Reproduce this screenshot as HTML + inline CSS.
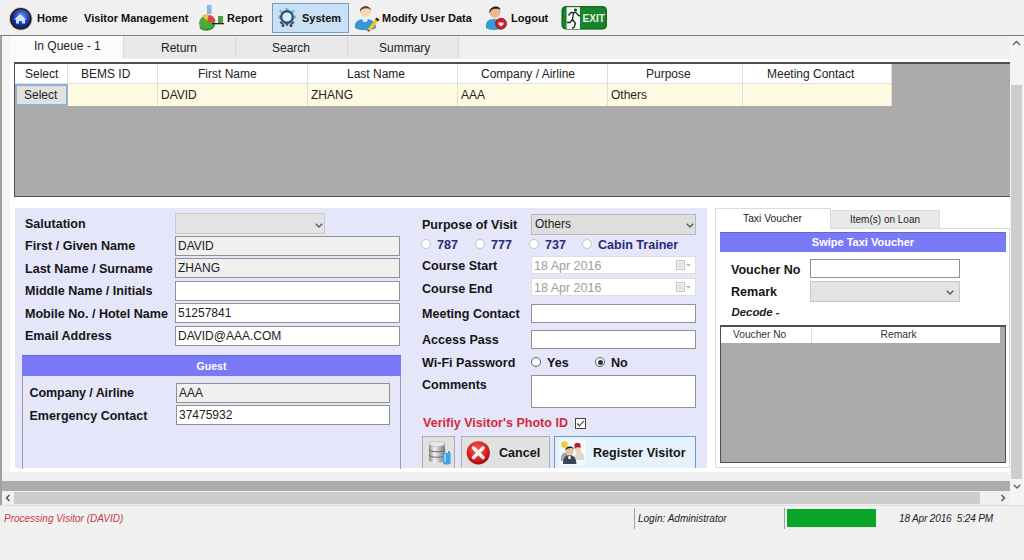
<!DOCTYPE html>
<html><head><meta charset="utf-8">
<style>
*{box-sizing:border-box;margin:0;padding:0}
html,body{width:1024px;height:560px;overflow:hidden;background:#f0f0f0;font-family:"Liberation Sans",sans-serif;color:#000}
.a{position:absolute}
.t{position:absolute;white-space:nowrap;line-height:1}
.mb{font-weight:bold;font-size:11px;color:#111}
.lb{font-weight:bold;font-size:12.55px;color:#151515;margin-top:1px}
.tb{position:absolute;background:#fff;border:1px solid #929292;height:20px;font-size:12px;color:#222;padding:3px 0 0 2px;line-height:13px;white-space:nowrap}
.tb.ro{background:#f0f0f0}
.hdr{position:absolute;background:#7a7af6;color:#fff;font-weight:bold;font-size:10.6px;text-align:center;line-height:22px;box-shadow:inset 0 1px #6666d8}
.gc{position:absolute;top:0;height:100%;border-right:1px solid #dcdcdc;font-size:12px;color:#222;white-space:nowrap}
.radio{position:absolute;width:10px;height:10px;border-radius:50%;border:1px solid #c4c4c4;background:#fff}
.rl{font-weight:bold;font-size:12.55px;color:#2a2a78;margin-top:1px}
</style></head>
<body>
<!-- MENU BAR -->
<div class="a" style="left:0;top:0;width:1024px;height:35px;background:#f0f0f0"></div>
<div class="a" style="left:0;top:35px;width:1024px;height:1px;background:#7d7d7d"></div>
<!-- home icon -->
<svg class="a" style="left:8px;top:6px" width="26" height="26" viewBox="0 0 26 26">
 <defs><radialGradient id="hg" cx="0.55" cy="0.35" r="0.75"><stop offset="0" stop-color="#6a8ef0"/><stop offset="0.55" stop-color="#1e36a8"/><stop offset="1" stop-color="#0c1250"/></radialGradient></defs>
 <circle cx="12.8" cy="12.8" r="11.8" fill="#d8c888" opacity="0.85"/>
 <circle cx="12.8" cy="12.8" r="10.8" fill="#141428"/>
 <circle cx="12.8" cy="12.8" r="9.6" fill="url(#hg)"/>
 <path d="M6 13.5 L12 8 L18.5 13.5 L17 13.5 L17 17.5 L14 17.5 L14 15 L11 15 L11 17.5 L8 17.5 L8 13.5 Z" fill="#c8e4ff"/>
</svg>
<div class="t mb" style="left:37px;top:13px">Home</div>
<div class="t mb" style="left:84px;top:13px">Visitor Management</div>
<!-- report icon -->
<svg class="a" style="left:194px;top:2px" width="34" height="32" viewBox="194 2 34 32">
 <rect x="207" y="5" width="4.5" height="9" fill="#8fb4e8"/>
 <ellipse cx="207" cy="23" rx="8" ry="7.5" fill="#4ea83a"/>
 <path d="M200 27 C202 31 212 31 214.5 25" fill="none" stroke="#2f8a2a" stroke-width="1.5"/>
 <path d="M207 21 L202 16 C204 14 207 13.8 209 14.5 Z" fill="#f0c040"/>
 <path d="M207.5 22 L209 15 C212 15 215 17.5 215.5 21.5 Z" fill="#e04048"/>
 <rect x="218" y="16" width="5" height="7" fill="#48a438"/>
 <rect x="212" y="23" width="12" height="1.3" fill="#222"/>
</svg>
<div class="t mb" style="left:227px;top:13px">Report</div>
<!-- system button -->
<div class="a" style="left:272px;top:3px;width:77px;height:30px;background:#c9e0f5;border:1px solid #6f9cc0"></div>
<svg class="a" style="left:272px;top:3px" width="30" height="30" viewBox="272 3 30 30">
 <g fill="#8a98a8" opacity="0.8">
  <rect x="278" y="15.5" width="3" height="3"/><rect x="293" y="15.5" width="3" height="3"/>
  <rect x="285.5" y="8" width="3" height="2.5"/>
  <rect x="279.5" y="10" width="2.5" height="2.5" transform="rotate(45 280.7 11.2)"/>
  <rect x="292" y="10" width="2.5" height="2.5" transform="rotate(45 293.2 11.2)"/>
 </g>
 <path d="M280 22 L283 24 M294 22 L291 24" stroke="#2a4a68" stroke-width="1.6"/>
 <circle cx="287" cy="17" r="5.8" fill="#dff0fb" stroke="#245a80" stroke-width="2.4"/>
 <path d="M284.5 22.5 L287 26.5 L289.5 22.5 Z" fill="#245a70"/>
 <circle cx="283" cy="25.5" r="1.5" fill="#7a2a3a"/>
 <circle cx="291" cy="25.5" r="1.5" fill="#7a2a3a"/>
 <circle cx="286" cy="16" r="2" fill="#f0e0d8" opacity="0.7"/>
</svg>
<div class="t mb" style="left:302px;top:13px">System</div>
<!-- modify user icon -->
<svg class="a" style="left:350px;top:2px" width="32" height="32" viewBox="350 2 32 32">
 <path d="M355 28 C354 22 358 19 365 19 C372 19 376 22 376 28 C372 31 359 31 355 28 Z" fill="#3a96d2"/>
 <path d="M362 19 L368 19 L366.5 22 L363.5 22 Z" fill="#d8eef8"/>
 <circle cx="365.5" cy="11.5" r="5.4" fill="#f4d6b4"/>
 <path d="M360 12 C359 5 371 4 371 11 C370 8.5 368 8 365.5 8.5 C363 8 361 9.5 360 12 Z" fill="#5a3a24"/>
 <path d="M367.5 29.5 L375 19.5 L378 21.5 L370.5 31 Z" fill="#f0c23a"/>
 <path d="M375 19.5 L376.5 17.5 L379.5 19.5 L378 21.5 Z" fill="#3a2418"/>
 <path d="M367.5 29.5 L370.5 31 L367.8 31.5 Z" fill="#222"/>
</svg>
<div class="t mb" style="left:382px;top:13px">Modify User Data</div>
<!-- logout icon -->
<svg class="a" style="left:480px;top:2px" width="30" height="32" viewBox="480 2 30 32">
 <path d="M486 28 C485 22 488 19 494 19 C499 19 502 22 502 28 C498 30.5 489 30.5 486 28 Z" fill="#3a9ad6"/>
 <circle cx="495" cy="12.5" r="5.4" fill="#eab88a"/>
 <path d="M489.5 13.5 C488.5 5 500.5 5 500.5 10 C499 8.5 496 8.5 493 9 C491 9.5 490.5 11.5 489.5 13.5 Z" fill="#221a14"/>
 <circle cx="501" cy="23.7" r="5.5" fill="#c8202c"/>
 <circle cx="501" cy="23.7" r="5.5" fill="none" stroke="#9a1018" stroke-width="0.8"/>
 <path d="M498.5 22.5 L503.5 22.5 L503.5 24.5 L501 26.5 L498.5 24.5 Z" fill="#f4e8e8"/>
</svg>
<div class="t mb" style="left:511px;top:13px">Logout</div>
<!-- exit icon -->
<svg class="a" style="left:556px;top:2px" width="56" height="32" viewBox="556 2 56 32">
 <rect x="561.5" y="6" width="45.5" height="23.5" rx="4.5" fill="#1a842c"/>
 <rect x="562.3" y="6.8" width="44" height="22" rx="4" fill="none" stroke="#0e5a1a" stroke-width="0.8"/>
 <rect x="566.6" y="7.2" width="13.4" height="21.8" fill="#f6fbf6"/>
 <circle cx="575.5" cy="10" r="1.5" fill="#1e2a1e"/>
 <path d="M568.5 15.5 L571 12.5 L576 12.6 L578.5 15.5 L580 15.8 M573.5 12.8 L572.5 19.5 L570 22.5 L567 22.5 M572.5 19.5 L575.5 23.5 L574 27.5 L572 28" fill="none" stroke="#14301a" stroke-width="1.3" stroke-linejoin="round"/>
 <text x="582.6" y="22.4" font-family="Liberation Sans" font-weight="bold" font-size="10" fill="#e4f6e0" textLength="22.3" lengthAdjust="spacingAndGlyphs">EXIT</text>
</svg>

<!-- CONTENT frame -->
<div class="a" style="left:0;top:36px;width:2px;height:469px;background:#a0a0a0"></div>
<!-- tab strip -->
<div class="a" style="left:2px;top:36px;width:8px;height:436px;background:#f4f4f4"></div>
<div class="a" style="left:10px;top:36px;width:113px;height:23px;background:#fbfbfb"></div>
<div class="t" style="left:34px;top:40px;font-size:12px;color:#222">In Queue - 1</div>
<div class="a" style="left:123px;top:37px;width:112px;height:21px;background:#e9e9e9;border-left:1px solid #d8d8d8"></div>
<div class="t" style="left:161px;top:42px;font-size:12px;color:#222">Return</div>
<div class="a" style="left:235px;top:37px;width:112px;height:21px;background:#e9e9e9;border-left:1px solid #d8d8d8"></div>
<div class="t" style="left:272px;top:42px;font-size:12px;color:#222">Search</div>
<div class="a" style="left:347px;top:37px;width:112px;height:21px;background:#e9e9e9;border-left:1px solid #d8d8d8;border-right:1px solid #d8d8d8"></div>
<div class="t" style="left:379px;top:42px;font-size:12px;color:#222">Summary</div>

<!-- tab page white -->
<div class="a" style="left:10px;top:59px;width:1000px;height:413px;background:#fff"></div>

<!-- grid -->
<div class="a" style="left:14px;top:62px;width:996px;height:135px;background:#ababab;border:1px solid #505050;border-top:2px solid #505050;border-right:none"></div>
<div class="a" style="left:15px;top:64px;width:877px;height:20px;background:#fff;border-bottom:1px solid #e0e0e0"></div>
<div class="a" style="left:15px;top:84px;width:877px;height:22px;background:#fffbe3"></div>
<!-- header cells -->
<div class="t" style="left:25px;top:68px;font-size:12px;color:#222">Select</div>
<div class="t" style="left:81px;top:68px;font-size:12px;color:#222">BEMS ID</div>
<div class="t" style="left:198px;top:68px;font-size:12px;color:#222">First Name</div>
<div class="t" style="left:347px;top:68px;font-size:12px;color:#222">Last Name</div>
<div class="t" style="left:481px;top:68px;font-size:12px;color:#222">Company / Airline</div>
<div class="t" style="left:646px;top:68px;font-size:12px;color:#222">Purpose</div>
<div class="t" style="left:767px;top:68px;font-size:12px;color:#222">Meeting Contact</div>
<!-- col lines -->
<div class="a" style="left:67px;top:64px;width:1px;height:42px;background:#dedede"></div>
<div class="a" style="left:157px;top:64px;width:1px;height:42px;background:#dedede"></div>
<div class="a" style="left:307px;top:64px;width:1px;height:42px;background:#dedede"></div>
<div class="a" style="left:457px;top:64px;width:1px;height:42px;background:#dedede"></div>
<div class="a" style="left:607px;top:64px;width:1px;height:42px;background:#dedede"></div>
<div class="a" style="left:742px;top:64px;width:1px;height:42px;background:#dedede"></div>
<div class="a" style="left:891px;top:64px;width:1px;height:42px;background:#dedede"></div>
<!-- select button -->
<div class="a" style="left:15px;top:84px;width:53px;height:22px;background:#e1e1e1;border:2px solid #8fb2d2"></div>
<div class="t" style="left:24px;top:89px;font-size:12px;color:#222">Select</div>
<div class="t" style="left:161px;top:89px;font-size:12px;color:#222">DAVID</div>
<div class="t" style="left:311px;top:89px;font-size:12px;color:#222">ZHANG</div>
<div class="t" style="left:461px;top:89px;font-size:12px;color:#222">AAA</div>
<div class="t" style="left:611px;top:89px;font-size:12px;color:#222">Others</div>

<!-- lavender panel -->
<div class="a" style="left:15px;top:208px;width:692px;height:260px;background:#e6e6fa"></div>

<!-- left form -->
<div class="t lb" style="left:25px;top:217px">Salutation</div>
<div class="a" style="left:175px;top:213px;width:150px;height:21px;background:#e3e3e3;border:1px solid #c8c8c8"></div>
<svg class="a" style="left:314.5px;top:222.5px" width="8" height="5" viewBox="0 0 8 5"><polyline points="0.8,0.8 4,4 7.2,0.8" fill="none" stroke="#555" stroke-width="1.3"/></svg>
<div class="t lb" style="left:25px;top:239px">First / Given Name</div>
<div class="tb ro" style="left:175px;top:236px;width:225px">DAVID</div>
<div class="t lb" style="left:25px;top:262px">Last Name / Surname</div>
<div class="tb ro" style="left:175px;top:258px;width:225px">ZHANG</div>
<div class="t lb" style="left:25px;top:284px">Middle Name / Initials</div>
<div class="tb" style="left:175px;top:281px;width:225px"></div>
<div class="t lb" style="left:25px;top:307px">Mobile No. / Hotel Name</div>
<div class="tb" style="left:175px;top:303px;width:225px">51257841</div>
<div class="t lb" style="left:25px;top:329px">Email Address</div>
<div class="tb" style="left:175px;top:326px;width:225px">DAVID@AAA.COM</div>

<!-- guest box -->
<div class="a" style="left:22px;top:355px;width:379px;height:114px;border:1px solid #9c9cb0;border-bottom:none"></div>
<div class="hdr" style="left:22px;top:355px;width:379px;height:21px">Guest</div>
<div class="t lb" style="left:29.5px;top:386px;letter-spacing:-0.1px">Company / Airline</div>
<div class="tb ro" style="left:176px;top:383px;width:214px">AAA</div>
<div class="t lb" style="left:29.5px;top:409px">Emergency Contact</div>
<div class="tb" style="left:176px;top:405px;width:214px">37475932</div>

<!-- middle form -->
<div class="t lb" style="left:422px;top:218px">Purpose of Visit</div>
<div class="a" style="left:531px;top:214px;width:165px;height:21px;background:#dedede;border:1px solid #b8b8b8"></div>
<div class="t" style="left:535px;top:218px;font-size:12px;color:#222">Others</div>
<svg class="a" style="left:685.5px;top:222.5px" width="8" height="5" viewBox="0 0 8 5"><polyline points="0.8,0.8 4,4 7.2,0.8" fill="none" stroke="#555" stroke-width="1.3"/></svg>
<div class="radio" style="left:421px;top:239px"></div><div class="t rl" style="left:437px;top:238px">787</div>
<div class="radio" style="left:475px;top:239px"></div><div class="t rl" style="left:491px;top:238px">777</div>
<div class="radio" style="left:529px;top:239px"></div><div class="t rl" style="left:545px;top:238px">737</div>
<div class="radio" style="left:582px;top:239px"></div><div class="t rl" style="left:598px;top:238px">Cabin Trainer</div>

<div class="t lb" style="left:422px;top:259px">Course Start</div>
<div class="tb" style="left:531px;top:256px;width:165px;height:18px;color:#a0a0a0;border-color:#dedede;font-size:12.5px;padding-top:3px">18 Apr 2016</div>
<svg class="a" style="left:676px;top:260px" width="16" height="10" viewBox="0 0 16 10"><rect x="0.5" y="0.5" width="8" height="9" fill="#f4f4f4" stroke="#c8c8c8"/><line x1="2" y1="3" x2="7" y2="3" stroke="#d0d0d0"/><line x1="2" y1="5" x2="7" y2="5" stroke="#d0d0d0"/><line x1="2" y1="7" x2="7" y2="7" stroke="#d0d0d0"/><path d="M10 4 L15 4 L12.5 6.5 Z" fill="#b8b8b8"/></svg>
<div class="t lb" style="left:422px;top:282px">Course End</div>
<div class="tb" style="left:531px;top:278px;width:165px;height:18px;color:#a0a0a0;border-color:#dedede;font-size:12.5px;padding-top:3px">18 Apr 2016</div>
<svg class="a" style="left:676px;top:282px" width="16" height="10" viewBox="0 0 16 10"><rect x="0.5" y="0.5" width="8" height="9" fill="#f4f4f4" stroke="#c8c8c8"/><line x1="2" y1="3" x2="7" y2="3" stroke="#d0d0d0"/><line x1="2" y1="5" x2="7" y2="5" stroke="#d0d0d0"/><line x1="2" y1="7" x2="7" y2="7" stroke="#d0d0d0"/><path d="M10 4 L15 4 L12.5 6.5 Z" fill="#b8b8b8"/></svg>
<div class="t lb" style="left:422px;top:307px">Meeting Contact</div>
<div class="tb" style="left:531px;top:304px;width:165px;height:19px"></div>
<div class="t lb" style="left:422px;top:333px">Access Pass</div>
<div class="tb" style="left:531px;top:330px;width:165px;height:19px"></div>
<div class="t lb" style="left:422px;top:356px">Wi-Fi Password</div>
<div class="radio" style="left:531px;top:357px;border-color:#5a5a5a"></div><div class="t lb" style="left:547px;top:356px">Yes</div>
<div class="radio" style="left:595px;top:357px;border-color:#5a5a5a"></div><div class="a" style="left:597.5px;top:359.5px;width:5px;height:5px;border-radius:50%;background:#333"></div><div class="t lb" style="left:611px;top:356px">No</div>
<div class="t lb" style="left:422px;top:378px">Comments</div>
<div class="tb" style="left:531px;top:375px;width:165px;height:33px"></div>
<div class="t lb" style="left:423px;top:416px;color:#d42a3a">Verifiy Visitor's Photo ID</div>
<svg class="a" style="left:575px;top:418px" width="11" height="11" viewBox="0 0 11 11"><rect x="0.5" y="0.5" width="10" height="10" fill="#fff" stroke="#444"/><polyline points="2.3,5.5 4.5,7.8 8.8,3" fill="none" stroke="#333" stroke-width="1.1"/></svg>

<!-- buttons -->
<div class="a" style="left:422px;top:436px;width:33px;height:32px;background:#e1e1e1;border:1px solid #adadad;border-bottom:none"></div>
<div class="a" style="left:461px;top:436px;width:89px;height:32px;background:#e1e1e1;border:1px solid #adadad;border-bottom:none"></div>
<svg class="a" style="left:426px;top:440px" width="26" height="26" viewBox="0 0 26 26">
 <defs><linearGradient id="dbg" x1="0" x2="1"><stop offset="0" stop-color="#8a8a8a"/><stop offset="0.35" stop-color="#f4f4f4"/><stop offset="1" stop-color="#7a7a7a"/></linearGradient></defs>
 <path d="M3 4 C3 1 19 1 19 4 L19 20 C19 23.5 3 23.5 3 20 Z" fill="url(#dbg)"/>
 <ellipse cx="11" cy="4" rx="8" ry="2.5" fill="#e8e8e8" stroke="#aaa" stroke-width="0.5"/>
 <path d="M3 9.5 C3 12.5 19 12.5 19 9.5" fill="none" stroke="#6a6a6a" stroke-width="1"/>
 <path d="M3 15 C3 18 19 18 19 15" fill="none" stroke="#6a6a6a" stroke-width="1"/>
 <path d="M17 13 L22 13 L22 11 L24 11 L24 13 L24.5 13 L24.5 23 C24.5 25 17 25 17 23 Z" fill="#3aa4e8"/>
 <rect x="18" y="14" width="2" height="8" fill="#8ad0ff"/>
</svg>
<svg class="a" style="left:466px;top:441px" width="25" height="25" viewBox="0 0 25 25">
 <defs><radialGradient id="cg" cx="0.45" cy="0.35" r="0.7"><stop offset="0" stop-color="#ff5a5a"/><stop offset="0.7" stop-color="#d01818"/><stop offset="1" stop-color="#8a0a0a"/></radialGradient></defs>
 <circle cx="12.3" cy="11.8" r="11.6" fill="url(#cg)"/>
 <path d="M7.5 7 L17 16.5 M17 7 L7.5 16.5" stroke="#f2f2f2" stroke-width="3.6" stroke-linecap="round"/>
</svg>
<div class="t lb" style="left:499px;top:446px">Cancel</div>
<div class="a" style="left:554px;top:436px;width:142px;height:32px;background:#e5f1fb;border:1px solid #5ea0d0;border-bottom:none"></div>
<svg class="a" style="left:555px;top:436px" width="36" height="34" viewBox="555 436 36 34">
 <rect x="559.5" y="439.5" width="26" height="26" fill="#f7fafc"/>
 <path d="M561 461 C560 455 563 452 567 452 L567 461 Z" fill="#98a8b4"/>
 <path d="M574 460 C574 453 578 451 581 452 C584 453 584.5 457 584 460 Z" fill="#dcd8d2"/>
 <circle cx="564.5" cy="444.5" r="3.3" fill="#e8d030"/>
 <circle cx="577.5" cy="446" r="3.2" fill="#b02838"/>
 <circle cx="578" cy="450" r="2.8" fill="#eed2bc"/>
 <circle cx="569.5" cy="451" r="4" fill="#e8c0a0"/>
 <path d="M565.5 450.5 C565 445.5 573.5 445 574 449.5 C572 447.5 568 447.5 565.5 450.5 Z" fill="#1e1e1e"/>
 <path d="M563 464 C563 457 566 455 569.5 455 C573 455 576 457 576.5 464 Z" fill="#3a4654"/>
 <path d="M568.5 455.5 L570.5 455.5 L571 459 L568 459 Z" fill="#e8e8e8"/>
</svg>
<div class="t lb" style="left:593px;top:446px">Register Visitor</div>

<!-- right panel -->
<div class="a" style="left:715px;top:228px;width:295px;height:240px;background:#fff;border:1px solid #dcdcdc"></div>
<div class="a" style="left:715px;top:208px;width:116px;height:21px;background:#fff;border:1px solid #dcdcdc;border-bottom:none"></div>
<div class="t" style="left:743px;top:214px;font-size:10.3px;color:#222">Taxi Voucher</div>
<div class="a" style="left:830px;top:210px;width:110px;height:18px;background:#e9e9e9;border:1px solid #dcdcdc;border-bottom:none"></div>
<div class="t" style="left:850px;top:215px;font-size:10px;color:#222">Item(s) on Loan</div>
<div class="hdr" style="left:720px;top:232px;width:286px;height:20px;font-size:11px;line-height:20px">Swipe Taxi Voucher</div>
<div class="t lb" style="left:731px;top:263px">Voucher No</div>
<div class="tb" style="left:810px;top:259px;width:150px;height:19px"></div>
<div class="t lb" style="left:731px;top:285px">Remark</div>
<div class="a" style="left:810px;top:281px;width:150px;height:21px;background:#e3e3e3;border:1px solid #c8c8c8"></div>
<svg class="a" style="left:945.5px;top:289.5px" width="8" height="5" viewBox="0 0 8 5"><polyline points="0.8,0.8 4,4 7.2,0.8" fill="none" stroke="#555" stroke-width="1.3"/></svg>
<div class="t" style="left:731.5px;top:307px;font-size:11.4px;font-weight:bold;font-style:italic;color:#222">Decode -</div>
<div class="a" style="left:720px;top:325px;width:286px;height:138px;background:#ababab;border:1px solid #505050;border-top:2px solid #505050"></div>
<div class="a" style="left:721px;top:327px;width:279px;height:16px;background:#fff"></div>
<div class="a" style="left:811px;top:327px;width:1px;height:16px;background:#dedede"></div>
<div class="t" style="left:733px;top:330px;font-size:10.2px;color:#333">Voucher No</div>
<div class="t" style="left:880.5px;top:330px;font-size:10.3px;color:#333">Remark</div>

<!-- dark band & scrollbars -->
<div class="a" style="left:2px;top:481px;width:1008px;height:10px;background:#ababab"></div>
<div class="a" style="left:1010px;top:36px;width:14px;height:469px;background:#f4f4f4"></div>
<div class="a" style="left:1011px;top:85px;width:11px;height:394px;background:#cdcdcd"></div>
<svg class="a" style="left:1012px;top:40px" width="9" height="6" viewBox="0 0 9 6"><polyline points="1,5 4.5,1.5 8,5" fill="none" stroke="#606060" stroke-width="1.3"/></svg>
<svg class="a" style="left:1012.5px;top:483.5px" width="8" height="5" viewBox="0 0 8 5"><polyline points="0.8,0.8 4,4 7.2,0.8" fill="none" stroke="#606060" stroke-width="1.3"/></svg>
<div class="a" style="left:2px;top:491px;width:1008px;height:14px;background:#f0f0f0"></div>
<div class="a" style="left:14px;top:492px;width:966px;height:12px;background:#cdcdcd"></div>
<svg class="a" style="left:5px;top:494px" width="6" height="8" viewBox="0 0 6 8"><polyline points="4.5,1 1.5,4 4.5,7" fill="none" stroke="#505050" stroke-width="1.4"/></svg>
<svg class="a" style="left:1000px;top:494px" width="6" height="8" viewBox="0 0 6 8"><polyline points="1.5,1 4.5,4 1.5,7" fill="none" stroke="#505050" stroke-width="1.4"/></svg>

<!-- status bar -->
<div class="a" style="left:0;top:505px;width:1024px;height:1px;background:#dcdcdc"></div>
<div class="t" style="left:4px;top:514px;font-size:10px;font-style:italic;color:#c83a4a">Processing Visitor (DAVID)</div>
<div class="a" style="left:634px;top:508px;width:1px;height:21px;background:#a0a0a0"></div>
<div class="t" style="left:638px;top:514px;font-size:10px;font-style:italic;color:#222">Login: Administrator</div>
<div class="a" style="left:784px;top:508px;width:1px;height:21px;background:#a0a0a0"></div>
<div class="a" style="left:787px;top:509px;width:89px;height:18px;background:#0aa62a"></div>
<div class="t" style="left:899px;top:514px;font-size:10px;font-style:italic;color:#222;letter-spacing:-0.15px">18 Apr 2016 &nbsp;5:24 PM</div>
</body></html>
